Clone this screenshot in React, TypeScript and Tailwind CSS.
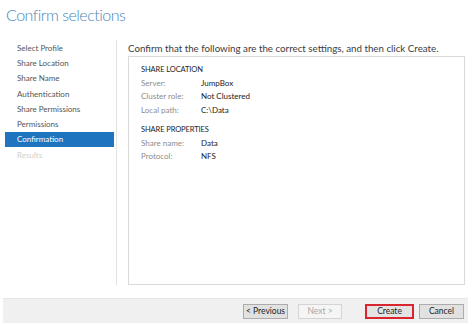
const navItems = [
  "Select Profile",
  "Share Location",
  "Share Name",
  "Authentication",
  "Share Permissions",
  "Permissions",
  "Confirmation",
  "Results",
];

const sections = [
  {
    title: "SHARE LOCATION",
    rows: [
      ["Server:", "JumpBox"],
      ["Cluster role:", "Not Clustered"],
      ["Local path:", "C:\\Data"],
    ],
  },
  {
    title: "SHARE PROPERTIES",
    rows: [
      ["Share name:", "Data"],
      ["Protocol:", "NFS"],
    ],
  },
];

function WizardButton({
  label,
  disabled,
  focused,
}: {
  label: string;
  disabled?: boolean;
  focused?: boolean;
}) {
  return (
    <button
      type="button"
      className={
        focused
          ? "flex h-[15px] w-[49px] items-center justify-center whitespace-nowrap border-2 border-[#d9262e] bg-[#e3e3e3] text-[8.5px] leading-none text-[#222]"
          : disabled
            ? "flex h-[15px] w-[44px] items-center justify-center whitespace-nowrap border border-[#d4d4d4] bg-[#f5f5f5] text-[8.5px] leading-none text-[#a8a8a8]"
            : "flex h-[15px] w-[45px] items-center justify-center whitespace-nowrap border border-[#acacac] bg-[#e1e1e1] text-[8.5px] leading-none text-[#222]"
      }
    >
      {label}
    </button>
  );
}

export default function App() {
  return (
    <div className="relative flex h-[325px] w-[474px] flex-col overflow-hidden bg-white font-['Lato',sans-serif]">
      <div className="flex h-[40px] items-start pl-[6px] pt-[4px]">
        <h1 className="whitespace-nowrap text-[16px] font-light leading-[22px] tracking-[-0.5px] text-[#4a86b8]">
          Confirm selections
        </h1>
      </div>

      <div className="flex h-[245px]">
        <nav className="flex w-[117px] flex-col border-r border-[#e2e2e2] pl-[5px] pr-[2px]">
          {navItems.map((item) => {
            const active = item === "Confirmation";
            const dim = item === "Results";
            return (
              <div
                key={item}
                className={
                  active
                    ? "flex h-[15.3px] items-center whitespace-nowrap bg-[#1f74bf] pl-[12px] text-[8px] text-white"
                    : dim
                      ? "flex h-[15.3px] items-center whitespace-nowrap pl-[12px] text-[8px] text-[#d0d0d0]"
                      : "flex h-[15.3px] items-center whitespace-nowrap pl-[12px] text-[8px] text-[#555]"
                }
              >
                {item}
              </div>
            );
          })}
        </nav>

        <div className="flex flex-1 flex-col pl-[11px] pr-[9px]">
          <p className="flex h-[16px] items-center whitespace-nowrap text-[9.75px] text-[#3c3c3c]">
            Confirm that the following are the correct settings, and then click Create.
          </p>
          <div className="flex flex-1 flex-col border border-[#dadada] pl-[12px] pt-[6px]">
            {sections.map((section, i) => (
              <div key={section.title} className={i > 0 ? "mt-[6px]" : ""}>
                <div className="flex h-[13.5px] items-center whitespace-nowrap text-[7.5px] tracking-[-0.1px] text-[#222]">
                  {section.title}
                </div>
                {section.rows.map(([label, value]) => (
                  <div key={label} className="flex h-[13.3px] items-center whitespace-nowrap text-[8px]">
                    <span className="w-[60px] text-[#8c8c8c]">{label}</span>
                    <span className="text-[#222]">{value}</span>
                  </div>
                ))}
              </div>
            ))}
          </div>
        </div>
      </div>

      <div className="h-[13px]" />

      <div className="ml-[3px] flex h-[25px] w-[465px] items-center justify-end border-t border-[#e6e6e6] bg-[#f0f0f0] pr-[4px]">
        <div className="flex items-center gap-[10px]">
          <WizardButton label="< Previous" />
          <WizardButton label="Next >" disabled />
        </div>
        <div className="ml-[23px] flex items-center gap-[5px]">
          <WizardButton label="Create" focused />
          <WizardButton label="Cancel" />
        </div>
      </div>
    </div>
  );
}
